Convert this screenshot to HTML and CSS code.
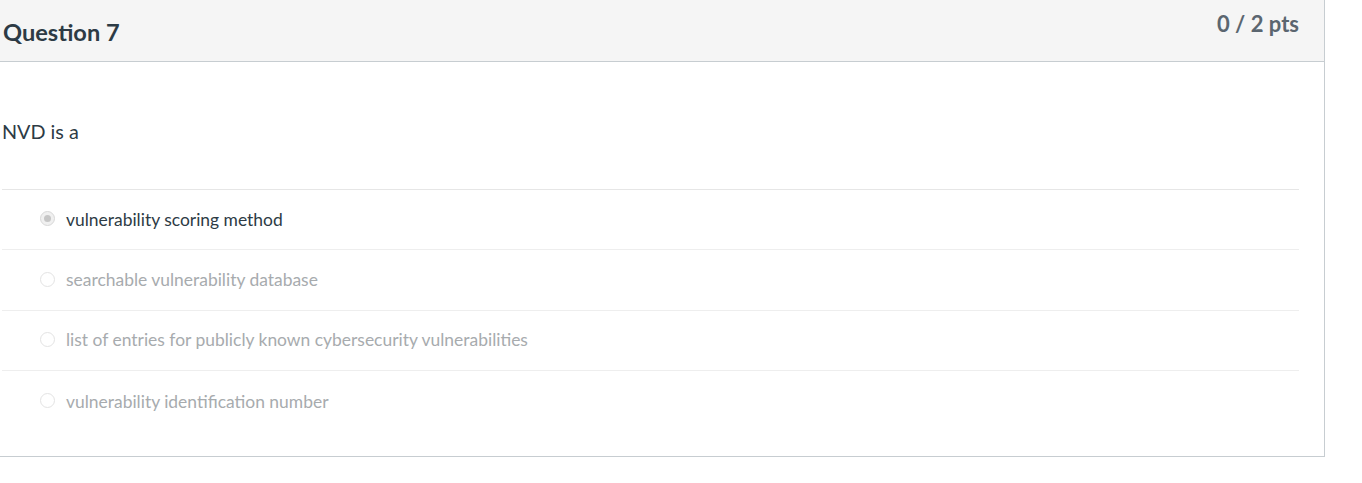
FILE: index.html
```html
<!DOCTYPE html>
<html>
<head>
<meta charset="utf-8">
<link rel="stylesheet" href="styles.css">
</head>
<body>
<div class="question">
  <div class="q-header">
    <h2 class="q-title">Question 7</h2>
    <div class="q-points">0 / 2 pts</div>
  </div>
  <div class="q-body">
    <p class="q-text">NVD is a</p>
    <div class="answers">
      <div class="answer selected">
        <span class="radio checked"></span>
        <span class="label">vulnerability scoring method</span>
      </div>
      <div class="answer">
        <span class="radio"></span>
        <span class="label">searchable vulnerability database</span>
      </div>
      <div class="answer">
        <span class="radio"></span>
        <span class="label">list of entries for publicly known cybersecurity vulnerabilities</span>
      </div>
      <div class="answer">
        <span class="radio"></span>
        <span class="label">vulnerability identification number</span>
      </div>
    </div>
  </div>
</div>
</body>
</html>
```
FILE: styles.css
```css
html, body {
  margin: 0;
  padding: 0;
  background: #ffffff;
}
body {
  font-family: Lato, "Open Sans", "Liberation Sans", sans-serif;
  color: #2d3b45;
}
.question {
  width: 1324px;
  border-right: 1px solid #c7cdd1;
  border-bottom: 1px solid #c7cdd1;
  box-sizing: content-box;
}
.q-header {
  height: 61px;
  background: #f5f5f5;
  border-bottom: 1px solid #c7cdd1;
  display: flex;
  justify-content: space-between;
  align-items: flex-start;
  padding: 0 25px 0 3px;
}
.q-title {
  margin: 17px 0 0;
  font-size: 23.6px;
  font-weight: 700;
  line-height: 30px;
  color: #2d3b45;
}
.q-points {
  margin-top: 10px;
  font-size: 22px;
  font-weight: 700;
  line-height: 28px;
  color: #5b6670;
}
.q-body {
  padding: 0 25px 24px 2px;
}
.q-text {
  margin: 0;
  padding-top: 56px;
  font-size: 19.8px;
  line-height: 26px;
  height: 71px;
  border-bottom: 1px solid #e6e6e6;
}
.answers {
  display: flex;
  flex-direction: column;
}
.answer {
  display: flex;
  align-items: center;
  box-sizing: border-box;
  height: 60.4px;
  border-bottom: 1px solid #eeeeee;
  padding-left: 38px;
  font-size: 17.45px;
  color: #a7abae;
}
.answer:last-child {
  border-bottom: none;
  height: 61px;
}
.answer.selected {
  color: #2d3b45;
}
.radio {
  width: 15px;
  height: 15px;
  border-radius: 50%;
  border: 1px solid #e3e3e3;
  box-sizing: border-box;
  margin-right: 11px;
  margin-top: -2px;
  background: #fff;
  position: relative;
}
.radio.checked {
  border-color: #d8d8d8;
  background: #f0f0f0;
}
.radio.checked::after {
  content: "";
  position: absolute;
  left: 3px;
  top: 3px;
  width: 7px;
  height: 7px;
  border-radius: 50%;
  background: #c6c6c6;
}
.label {
  line-height: 22px;
}
```
